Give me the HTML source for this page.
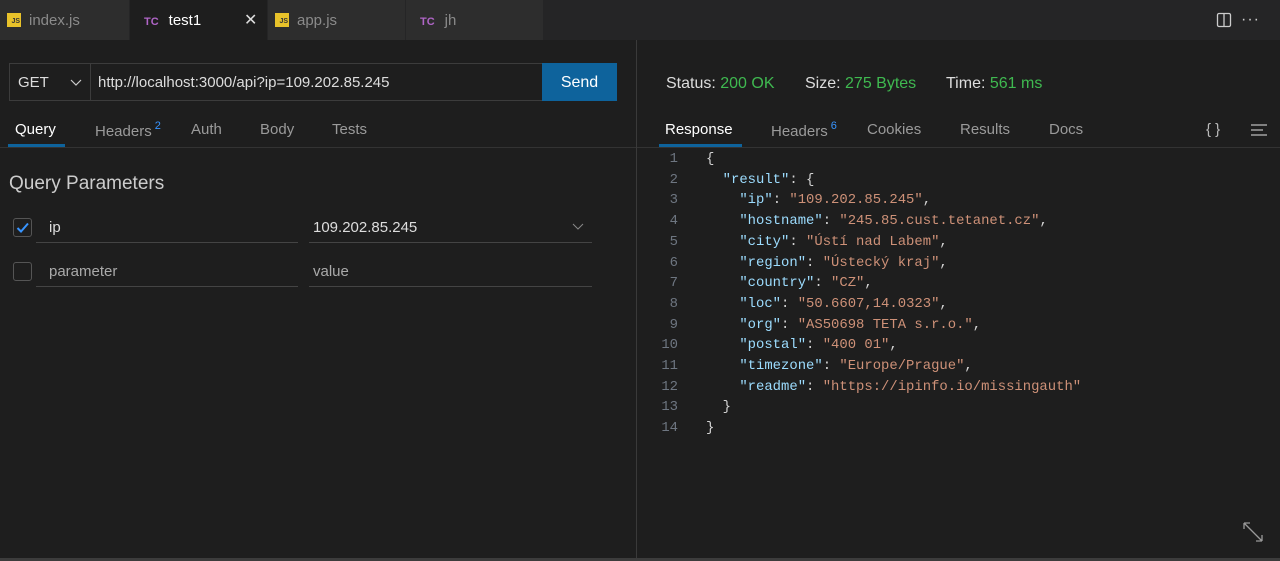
<!DOCTYPE html>
<html><head><meta charset="utf-8"><style>
*{margin:0;padding:0;box-sizing:border-box}
body{width:1280px;height:561px;background:#1e1e1e;font-family:"Liberation Sans",sans-serif;color:#ccc;position:relative;overflow:hidden}
.abs{position:absolute}
.tabbar{left:0;top:0;width:1280px;height:40px;background:#252526}
.tab{top:0;height:40px;background:#2d2d2d;font-size:15px;color:#8a8a8a;line-height:42px}
.js{display:inline-block;width:14px;height:14px;background:#e8c22a;color:#333;font-size:7px;font-weight:bold;line-height:18px;text-align:right;padding-right:1px;vertical-align:middle;margin:-3px 8px 0 7px}
.tc{color:#b065c7;font-size:11px;font-weight:bold;margin:0 10px 0 14px}
.sub{font-size:15px;color:#9a9a9a}
.code{font-family:"Liberation Mono",monospace;font-size:13.9px;line-height:20.7px;white-space:pre}
.k{color:#9cdcfe}.s{color:#ce9178}
.green{color:#3fb950}
sup{color:#3794ff;font-size:11px;margin-left:3px;position:relative;top:-1px}
</style></head><body>
<div class="abs tabbar"></div>
<div class="abs tab" style="left:0;width:129px"><span class="js">JS</span>index.js</div>
<div class="abs tab" style="left:130px;width:137px;background:#1e1e1e;color:#fff"><span class="tc">TC</span>test1<span style="position:absolute;left:114px;color:#ddd;font-size:16px">✕</span></div>
<div class="abs tab" style="left:268px;width:137px"><span class="js">JS</span>app.js</div>
<div class="abs tab" style="left:406px;width:137px"><span class="tc">TC</span>jh</div>
<svg class="abs" style="left:1216px;top:12px" width="16" height="16"><rect x="1.5" y="1.5" width="13" height="13" rx="1.5" fill="none" stroke="#ccc" stroke-width="1.3"/><line x1="8" y1="2" x2="8" y2="14" stroke="#ccc" stroke-width="1.3"/></svg>
<div class="abs" style="left:1241px;top:11px;color:#ccc;font-size:16px;letter-spacing:1px">···</div>

<!-- left -->
<div class="abs" style="left:9px;top:63px;width:82px;height:38px;border:1px solid #3c3c3c;background:#1e1e1e;font-size:15px;color:#ddd;line-height:38px;padding-left:8px">GET<svg style="position:absolute;left:60px;top:15px" width="12" height="8"><path d="M1 1l5 5 5-5" fill="none" stroke="#ccc" stroke-width="1.2"/></svg></div>
<div class="abs" style="left:90px;top:63px;width:453px;height:38px;border:1px solid #3c3c3c;border-left:none;font-size:15px;color:#ddd;line-height:38px;padding-left:8px">http://localhost:3000/api?ip=109.202.85.245</div>
<div class="abs" style="left:542px;top:63px;width:75px;height:38px;background:#0e639c;color:#fff;font-size:16px;line-height:40px;text-align:center">Send</div>
<div class="abs" style="left:0;top:147px;width:636px;height:1px;background:#333"></div>
<div class="abs sub" style="left:15px;top:121px;color:#fff">Query</div>
<div class="abs" style="left:8px;top:144px;width:57px;height:3px;background:#0e639c"></div>
<div class="abs sub" style="left:95px;top:121px">Headers<sup>2</sup></div>
<div class="abs sub" style="left:191px;top:121px">Auth</div>
<div class="abs sub" style="left:260px;top:121px">Body</div>
<div class="abs sub" style="left:332px;top:121px">Tests</div>
<div class="abs" style="left:9px;top:173px;font-size:19px;color:#ccc">Query Parameters</div>
<div class="abs" style="left:13px;top:218px;width:19px;height:19px;border:1px solid #555;border-radius:3px"><svg width="17" height="17"><path d="M3.5 9l3.5 3.5 7-8" fill="none" stroke="#3794ff" stroke-width="2"/></svg></div>
<div class="abs" style="left:49px;top:219px;font-size:15px;color:#ddd">ip</div>
<div class="abs" style="left:36px;top:242px;width:262px;height:1px;background:#444"></div>
<div class="abs" style="left:313px;top:219px;font-size:15px;color:#ddd">109.202.85.245</div>
<svg class="abs" style="left:572px;top:223px" width="12" height="8"><path d="M1 1l5 5 5-5" fill="none" stroke="#888" stroke-width="1"/></svg>
<div class="abs" style="left:309px;top:242px;width:283px;height:1px;background:#444"></div>
<div class="abs" style="left:13px;top:262px;width:19px;height:19px;border:1px solid #555;border-radius:3px"></div>
<div class="abs" style="left:49px;top:263px;font-size:15px;color:#aaa">parameter</div>
<div class="abs" style="left:36px;top:286px;width:262px;height:1px;background:#444"></div>
<div class="abs" style="left:313px;top:263px;font-size:15px;color:#aaa">value</div>
<div class="abs" style="left:309px;top:286px;width:283px;height:1px;background:#444"></div>

<div class="abs" style="left:636px;top:40px;width:1px;height:518px;background:#3a3a3a"></div>

<!-- right -->
<div class="abs" style="left:666px;top:75px;font-size:16px;color:#ddd">Status: <span class="green">200 OK</span></div>
<div class="abs" style="left:805px;top:75px;font-size:16px;color:#ddd">Size: <span class="green">275 Bytes</span></div>
<div class="abs" style="left:946px;top:75px;font-size:16px;color:#ddd">Time: <span class="green">561 ms</span></div>
<div class="abs" style="left:637px;top:147px;width:643px;height:1px;background:#333"></div>
<div class="abs sub" style="left:665px;top:121px;color:#fff">Response</div>
<div class="abs" style="left:659px;top:144px;width:83px;height:3px;background:#0e639c"></div>
<div class="abs sub" style="left:771px;top:121px">Headers<sup>6</sup></div>
<div class="abs sub" style="left:867px;top:121px">Cookies</div>
<div class="abs sub" style="left:960px;top:121px">Results</div>
<div class="abs sub" style="left:1049px;top:121px">Docs</div>
<div class="abs sub" style="left:1206px;top:121px;color:#bbb">{ }</div>
<svg class="abs" style="left:1250px;top:123px" width="18" height="14"><path d="M1 2h16M1 7h12M1 12h16" stroke="#bbb" stroke-width="1.3"/></svg>

<div class="abs code" style="left:650px;top:149px;width:28px;text-align:right;color:#6e7681">1
2
3
4
5
6
7
8
9
10
11
12
13
14</div>
<div class="abs code" style="left:706px;top:149px;color:#d4d4d4">{
  <span class="k">"result"</span>: {
    <span class="k">"ip"</span>: <span class="s">"109.202.85.245"</span>,
    <span class="k">"hostname"</span>: <span class="s">"245.85.cust.tetanet.cz"</span>,
    <span class="k">"city"</span>: <span class="s">"Ústí nad Labem"</span>,
    <span class="k">"region"</span>: <span class="s">"Ústecký kraj"</span>,
    <span class="k">"country"</span>: <span class="s">"CZ"</span>,
    <span class="k">"loc"</span>: <span class="s">"50.6607,14.0323"</span>,
    <span class="k">"org"</span>: <span class="s">"AS50698 TETA s.r.o."</span>,
    <span class="k">"postal"</span>: <span class="s">"400 01"</span>,
    <span class="k">"timezone"</span>: <span class="s">"Europe/Prague"</span>,
    <span class="k">"readme"</span>: <span class="s">"https://ipinfo.io/missingauth"</span>
  }
}</div>
<svg class="abs" style="left:1241px;top:520px" width="24" height="24"><path d="M3 3l18 18M3 3h6M3 3v6M21 21h-6M21 21v-6" fill="none" stroke="#999" stroke-width="1.3"/></svg>
<div class="abs" style="left:0;top:558px;width:1280px;height:3px;background:#3c3c3c"></div>
</body></html>
